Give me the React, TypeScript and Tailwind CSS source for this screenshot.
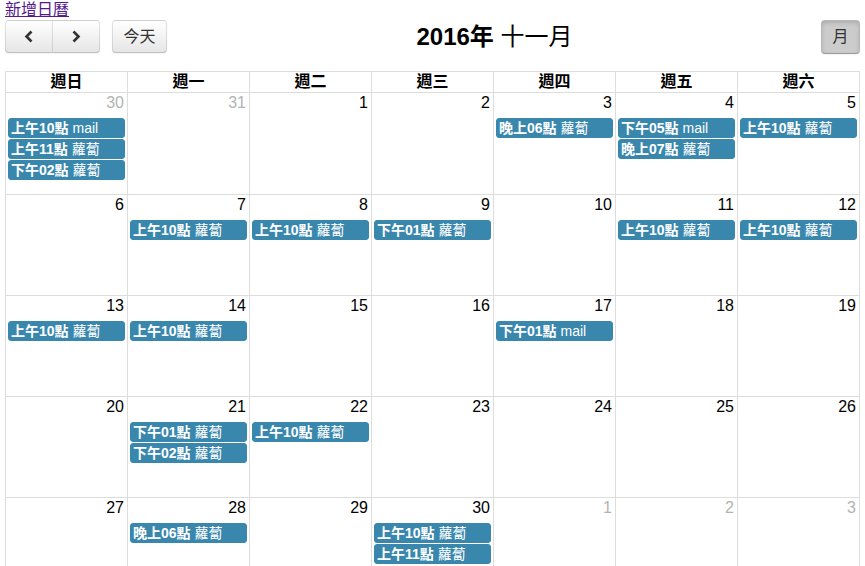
type Ev = { time: string; title: string };
type Day = { n: number; other?: boolean; events?: Ev[] };

const r = (time: string): Ev => ({ time, title: "蘿蔔" });
const m = (time: string): Ev => ({ time, title: "mail" });

const weeks: Day[][] = [
  [
    { n: 30, other: true, events: [m("上午10點"), r("上午11點"), r("下午02點")] },
    { n: 31, other: true },
    { n: 1 },
    { n: 2 },
    { n: 3, events: [r("晚上06點")] },
    { n: 4, events: [m("下午05點"), r("晚上07點")] },
    { n: 5, events: [r("上午10點")] },
  ],
  [
    { n: 6 },
    { n: 7, events: [r("上午10點")] },
    { n: 8, events: [r("上午10點")] },
    { n: 9, events: [r("下午01點")] },
    { n: 10 },
    { n: 11, events: [r("上午10點")] },
    { n: 12, events: [r("上午10點")] },
  ],
  [
    { n: 13, events: [r("上午10點")] },
    { n: 14, events: [r("上午10點")] },
    { n: 15 },
    { n: 16 },
    { n: 17, events: [m("下午01點")] },
    { n: 18 },
    { n: 19 },
  ],
  [
    { n: 20 },
    { n: 21, events: [r("下午01點"), r("下午02點")] },
    { n: 22, events: [r("上午10點")] },
    { n: 23 },
    { n: 24 },
    { n: 25 },
    { n: 26 },
  ],
  [
    { n: 27 },
    { n: 28, events: [r("晚上06點")] },
    { n: 29 },
    { n: 30, events: [r("上午10點"), r("上午11點")] },
    { n: 1, other: true },
    { n: 2, other: true },
    { n: 3, other: true },
  ],
];

const dayNames = ["週日", "週一", "週二", "週三", "週四", "週五", "週六"];

const btn =
  "flex h-[33px] items-center justify-center border border-[rgba(0,0,0,0.1)] border-b-[rgba(0,0,0,0.25)] bg-[#f5f5f5] bg-[linear-gradient(#fff,#e6e6e6)] text-[16px] text-[#333] shadow-[inset_0_1px_0_rgba(255,255,255,0.2),0_1px_2px_rgba(0,0,0,0.05)]";

function Chevron({ dir }: { dir: "left" | "right" }) {
  return (
    <svg width="10" height="13" viewBox="0 0 10 13" fill="none">
      <path
        d={dir === "left" ? "M7.5 1.5 L2.5 6.5 L7.5 11.5" : "M2.5 1.5 L7.5 6.5 L2.5 11.5"}
        stroke="#333"
        strokeWidth="2.6"
      />
    </svg>
  );
}

export default function App() {
  return (
    <div className="min-h-screen bg-white px-[5px] font-['Liberation_Sans','Noto_Sans_CJK_TC',sans-serif] text-black">
      <a href="#" className="block w-max text-[16px] leading-[20px] text-[#551a8b] underline">
        新增日曆
      </a>

      <div className="flex h-[33px] items-center">
        <div className="flex w-[163px] items-center">
          <button className={`${btn} w-[48px] rounded-l-[4px]`}>
            <Chevron dir="left" />
          </button>
          <button className={`${btn} -ml-px w-[48px] rounded-r-[4px]`}>
            <Chevron dir="right" />
          </button>
          <button className={`${btn} ml-[12px] w-[55px] rounded-[4px]`}>今天</button>
        </div>
        <div className="flex-1 text-center text-[24px] leading-[30px]">
          <b>2016年</b> 十一月
        </div>
        <button className="flex h-[34px] w-[39px] items-center justify-center rounded-[4px] border border-[rgba(0,0,0,0.1)] border-b-[rgba(0,0,0,0.25)] bg-[#cccccc] text-[16px] text-[#333] shadow-[inset_0_2px_4px_rgba(0,0,0,0.15),0_1px_2px_rgba(0,0,0,0.05)]">
          月
        </button>
      </div>

      <div className="mt-[18px] w-[855px] border-l border-t border-[#ddd]">
        <div className="grid grid-cols-7">
          {dayNames.map((d) => (
            <div
              key={d}
              className="h-[21px] border-b border-r border-[#ddd] text-center text-[16px] font-bold leading-[20px]"
            >
              {d}
            </div>
          ))}
        </div>
        {weeks.map((week, wi) => (
          <div key={wi} className="grid grid-cols-7">
            {week.map((day, di) => (
              <div
                key={di}
                className={`${wi === 0 ? "h-[102px]" : "h-[101px]"} overflow-hidden border-b border-r border-[#ddd]`}
              >
                <div
                  className={`pr-[3px] text-right text-[16px] leading-[19px] ${day.other ? "text-[#b3b3b3]" : "text-black"}`}
                >
                  {day.n}
                </div>
                <div className="pt-[5px]">
                  {(day.events ?? []).map((ev, ei) => (
                    <div
                      key={ei}
                      className="mx-[2px] mb-[1px] mt-[1px] h-[20px] overflow-hidden whitespace-nowrap rounded-[3px] border border-[#3a87ad] bg-[#3a87ad] px-[2px] text-[14px] leading-[18px] text-white first:mt-[1px] [&:not(:first-child)]:mt-0"
                    >
                      <b>{ev.time}</b> {ev.title}
                    </div>
                  ))}
                </div>
              </div>
            ))}
          </div>
        ))}
      </div>
    </div>
  );
}
